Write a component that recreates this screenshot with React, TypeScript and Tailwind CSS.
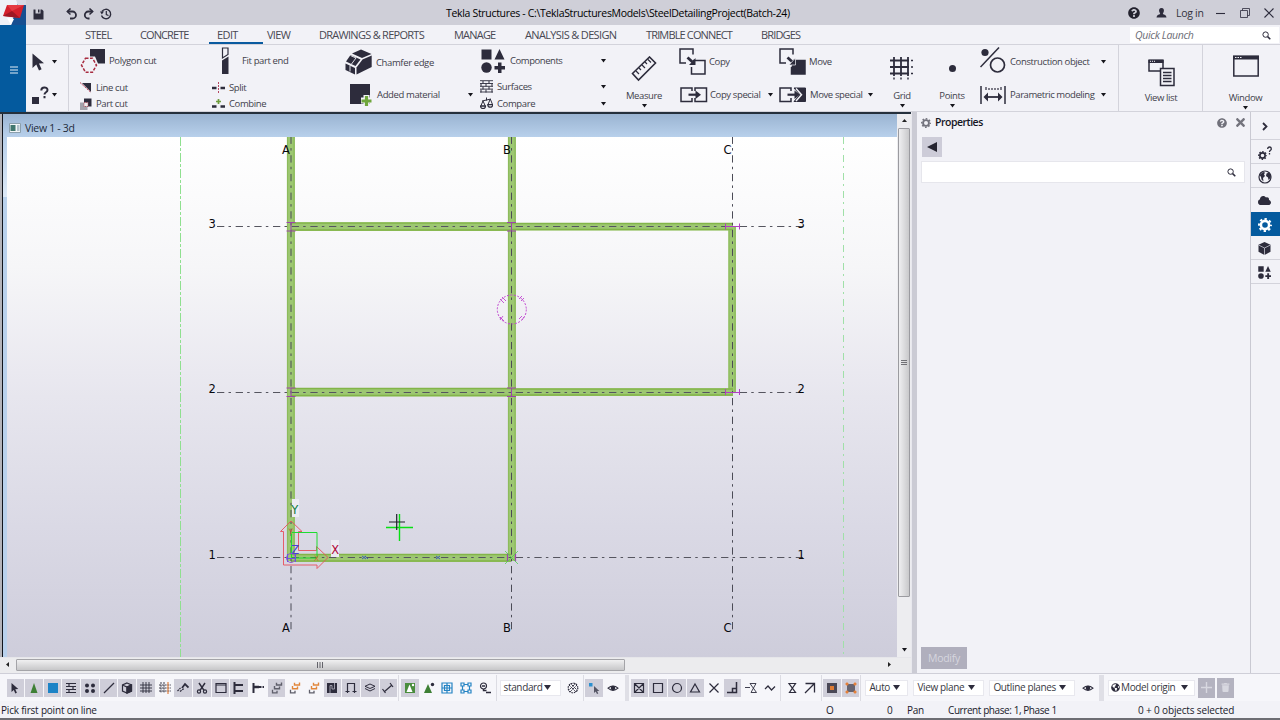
import React from 'react';
import { FaQuestionCircle, FaCloud, FaGlobeAmericas, FaTimes, FaTrash } from 'react-icons/fa';

const INK = '#2d2c3c';

type SvgProps = { w: number; h: number; className?: string; children: React.ReactNode };

const Glyph = ({ w, h, className = '', children }: SvgProps) => (
  <svg width={w} height={h} viewBox={`0 0 ${w} ${h}`} className={`block shrink-0 ${className}`} fill="none" stroke={INK}>
    {children}
  </svg>
);

const Caret = ({ className = '' }: { className?: string }) => (
  <svg width="5" height="4" viewBox="0 0 5 4" className={`block shrink-0 ${className}`}>
    <path d="M0 0h5L2.500 3.600z" fill="#15151c" />
  </svg>
);

/* ---------- Shared drawings ---------- */

const Shapes = ({ size, className = '' }: { size: number; className?: string }) => (
  <svg width={size} height={size} viewBox="0 0 24 24" className={`block shrink-0 ${className}`} fill={INK}>
    <path d="M0.500 0.500h10v10h-10zM18.500 0l5 10.500h-10z" />
    <circle cx="5.500" cy="18.500" r="5.200" />
    <path d="M17 13.500h3.500V17H24v3.500h-3.500V24H17v-3.500h-3.500V17H17z" />
  </svg>
);

const Search = ({ className = '' }: { className?: string }) => (
  <Glyph w={9} h={9} className={className}>
    <circle cx="3.600" cy="3.600" r="2.700" strokeWidth="1" />
    <path d="M5.600 5.600L8.300 8.300" strokeWidth="1.500" />
  </Glyph>
);

const Arrow = ({ className = '' }: { className?: string }) => (
  <Glyph w={13} h={18} className={className}>
    <path d="M0.500 0.500V15l3.800-3.500L7 17.500l2.600-1.200L7 10.500l5-0.300z" fill={INK} stroke="none" />
  </Glyph>
);

/* ---------- Title bar and tabs ---------- */

const TitleBar = () => (
  <div className="flex h-[25px] items-center bg-[#cfcfd8] pt-px">
    <Glyph w={11} h={11} className="ml-[7px] mt-[2px]">
      <path d="M0.500 0.500h2v4h5v-4h1.500L10.500 2v8.500h-10z" fill={INK} stroke="none" />
      <path d="M5 0.500h1.500V3.500H5z" fill={INK} stroke="none" />
    </Glyph>
    <Glyph w={11} h={12} className="ml-[22px] mt-[2px]">
      <path d="M1.500 3.500H6.500a3.500 3.500 0 0 1 0 7H4" strokeWidth="1.800" />
      <path d="M4.500 0.500L1.300 3.600L4.500 6.500" strokeWidth="1.500" />
    </Glyph>
    <Glyph w={11} h={12} className="ml-[6px] mt-[2px]">
      <path d="M9.500 3.500H5.300a3.500 3.500 0 0 0 0 7H6.500" strokeWidth="1.800" />
      <path d="M6.500 0.500L9.700 3.600L6.500 6.500" strokeWidth="1.500" />
    </Glyph>
    <Glyph w={12} h={12} className="ml-[6px] mt-[2px]">
      <path d="M2 3.500a4.700 4.700 0 1 1-0.500 4" strokeWidth="1.400" />
      <path d="M0 3.500h4L1.800 6.500z" fill={INK} stroke="none" />
      <path d="M6.300 3V6.500L8.500 7.500" strokeWidth="1.200" />
    </Glyph>
    <div className="ml-[334px] w-[682px] whitespace-nowrap pt-px text-[10.5px] tracking-[-0.32px] text-black">
      Tekla Structures - C:\TeklaStructuresModels\SteelDetailingProject(Batch-24)
    </div>
    <FaQuestionCircle className="h-3 w-3 shrink-0 text-[#23222e]" />
    <Glyph w={11} h={10} className="ml-4">
      <path d="M5.500 0c2 0 2.800 1.600 2.300 3.500L6.800 6c1.500 0.700 3.500 1 3.700 3.500h-10C0.700 7 2.700 6.700 4.200 6L3.200 3.500C2.700 1.600 3.500 0 5.500 0z" fill={INK} stroke="none" />
    </Glyph>
    <span className="ml-[9px] w-[29px] whitespace-nowrap pt-px text-[10.5px] tracking-[-0.3px] text-[#333340]">Log in</span>
    <Glyph w={9} h={10} className="ml-[11px]">
      <path d="M0 5.500h9" strokeWidth="1.100" />
    </Glyph>
    <Glyph w={10} h={10} className="ml-[15px]">
      <path d="M0.500 2.500h7v7h-7zM2.500 2.500v-2h7v7h-2" strokeWidth="0.800" />
    </Glyph>
    <Glyph w={10} h={10} className="ml-[14px]">
      <path d="M0.500 0.500l9 9M9.500 0.500l-9 9" strokeWidth="1.100" />
    </Glyph>
  </div>
);

const Tab = ({ label, className }: { label: string; className: string }) => (
  <div className={`whitespace-nowrap text-[11px] leading-[19px] text-[#484852] ${className}`}>{label}</div>
);

const Tabs = () => (
  <div className="flex h-5 border-b border-[#d3d3db]">
    <Tab label="STEEL" className="ml-[59px] w-[55px] tracking-[-0.7px]" />
    <Tab label="CONCRETE" className="w-[69px] tracking-[-0.9px]" />
    <div className="h-[19px] w-[54px] border-b-2 border-[#0a5ba0] pl-2">
      <Tab label="EDIT" className="tracking-[-0.6px]" />
    </div>
    <Tab label="VIEW" className="ml-1 w-[52px] tracking-[-0.7px]" />
    <Tab label="DRAWINGS & REPORTS" className="w-[135px] tracking-[-0.72px]" />
    <Tab label="MANAGE" className="w-[71px] tracking-[-0.8px]" />
    <Tab label="ANALYSIS & DESIGN" className="w-[121px] tracking-[-0.65px]" />
    <Tab label="TRIMBLE CONNECT" className="w-[115px] tracking-[-0.85px]" />
    <Tab label="BRIDGES" className="w-[369px] tracking-[-0.85px]" />
    <div className="mt-[2px] flex h-[16px] w-[149px] shrink-0 items-center bg-white pl-[5px] pr-[8px] pt-px text-[10.5px] italic text-[#6d6d76]">
      <span className="flex-1 tracking-[-0.35px]">Quick Launch</span>
      <Search />
    </div>
  </div>
);

/* ---------- Ribbon ---------- */

const Label = ({ children, className = '' }: { children: React.ReactNode; className?: string }) => (
  <span className={`whitespace-nowrap text-[9.5px] leading-[14px] tracking-[-0.38px] text-[#3f3f4b] ${className}`}>{children}</span>
);

const PairIcon = ({ filled }: { filled?: boolean }) => (
  <Glyph w={27} h={28}>
    <path d="M14 6.500V1H1v14h6" strokeWidth="1.500" />
    <path d="M14 12.500h12V26H12.500v-7" strokeWidth="1.500" fill={filled ? INK : 'none'} />
    <path d="M8.500 9.500l5 4.500" strokeWidth="2.800" />
    <path d="M16.500 10v7H10z" fill={INK} stroke={filled ? '#f2f2f7' : 'none'} strokeWidth="0.700" />
  </Glyph>
);

const SpecialIcon = ({ filled }: { filled?: boolean }) => (
  <Glyph w={28} h={16}>
    <path d="M12 4V1H1v13.500h11V11" strokeWidth="1.500" />
    {filled ? (
      <path d="M15 1h11.500v13.500H15l6-6.700z" fill={INK} strokeWidth="1" />
    ) : (
      <path d="M15 4V1h11.500v13.500H15V11" strokeWidth="1.500" />
    )}
    {filled && <path d="M17 1.500l5.500 6.200-5.500 6.300" stroke="#f2f2f7" strokeWidth="1.500" />}
    <path d="M8.500 7.700h8" strokeWidth="2.200" />
    <path d="M15.500 3.500l5.500 4.200-5.500 4.300z" fill={INK} stroke="none" />
  </Glyph>
);

const Tall = ({ label, className = '', children }: { label: string; className?: string; children: React.ReactNode }) => (
  <div className={`flex flex-col items-center ${className}`}>
    <div className="flex h-[44px] items-center">{children}</div>
    <Label className="leading-[13px]">{label}</Label>
    <Caret className="mt-px" />
  </div>
);

const CutColumn = () => (
  <div className="flex w-[140px] flex-col pl-[11px]">
    <div className="flex h-[34px] items-center">
      <Glyph w={26} h={26}>
        <path d="M10 1h15v14.500h-7L15 8.500H10z" fill={INK} stroke="none" />
        <path d="M5.500 10.200h7l4 7-4 7h-7l-4-7z" stroke="#a82c40" strokeWidth="1.500" strokeDasharray="3 1.500" />
      </Glyph>
      <Label className="ml-[3px] pt-px">Polygon cut</Label>
    </div>
    <div className="mt-[4px] flex h-[15px] items-center">
      <Glyph w={12} h={11}>
        <path d="M2 1h9v9z" fill={INK} stroke="none" />
        <path d="M0 0.500l11 10" stroke="#c0405a" strokeDasharray="2 1" />
      </Glyph>
      <Label className="ml-1">Line cut</Label>
    </div>
    <div className="mt-[2px] flex h-[15px] items-center">
      <Glyph w={12} h={12}>
        <path d="M0 4.500h7.500V12H0z" fill="#a3a3ac" stroke="none" />
        <path d="M4 0.500h7.500v8H4z" fill={INK} stroke="none" />
        <path d="M4 4.500h4v4H4z" fill="#eee" stroke="#b25162" strokeDasharray="1 1" />
      </Glyph>
      <Label className="ml-1">Part cut</Label>
    </div>
  </div>
);

const SplitColumn = () => (
  <div className="flex w-[132px] flex-col">
    <div className="flex h-[34px] items-center pl-3">
      <Glyph w={9} h={28}>
        <path d="M1.500 1h5.500v6.500l-5.500 3.500z" strokeWidth="1.200" />
        <path d="M1 13.500l6.500-4V27H1z" fill={INK} stroke="none" />
      </Glyph>
      <Label className="ml-3 pt-px tracking-[-0.25px]">Fit part end</Label>
    </div>
    <div className="mt-[4px] flex h-[15px] items-center pl-[3px]">
      <Glyph w={13} h={12}>
        <path d="M0 6h4.500M8.500 6H13" strokeWidth="2.500" />
        <path d="M6.500 0v12" stroke="#b44660" strokeDasharray="2 1" />
      </Glyph>
      <Label className="ml-1">Split</Label>
    </div>
    <div className="mt-[2px] flex h-[15px] items-center pl-[3px]">
      <Glyph w={13} h={12}>
        <path d="M0 8.500h4.500M8.500 8.500H13" strokeWidth="2.500" />
        <path d="M6.500 1v5M4 3.500h5" stroke="#6d9c3c" strokeWidth="1.700" />
      </Glyph>
      <Label className="ml-1">Combine</Label>
    </div>
  </div>
);

const SolidColumn = () => (
  <div className="flex w-[136px] flex-col pl-1">
    <div className="flex h-[34px] items-center">
      <Glyph w={27} h={26}>
        <path d="M7 4.500L16 0.500l10.500 4.500-9.500 4z" fill={INK} stroke="none" />
        <path d="M5.500 6L15.500 10.500 10.500 17 1 12.500z" fill={INK} stroke="none" />
        <path d="M5.500 6.500l5.500 2.500-4.500 6" stroke="#f2f2f7" strokeWidth="0.900" />
        <path d="M0.500 14.500L10 19v6.500L0.500 21z" fill={INK} stroke="none" />
        <path d="M26.700 6.500V18L11.500 25.500v-7L17.500 10.500z" fill={INK} stroke="none" />
        <path d="M5 16.500v6" stroke="#f2f2f7" strokeWidth="0.900" />
      </Glyph>
      <Label className="ml-[4px] pt-px">Chamfer edge</Label>
    </div>
    <div className="flex h-[32px] items-center pl-[5px]">
      <Glyph w={23} h={23}>
        <path d="M0 0h20v20H0z" fill={INK} stroke="none" />
        <path d="M16.500 11v12M11 16.500h12" stroke="#f2f2f7" strokeWidth="6" />
        <path d="M16.500 12v10M11.500 17h10" stroke="#6fa63c" strokeWidth="3.200" />
      </Glyph>
      <Label className="ml-1 w-[93px] tracking-[-0.3px]">Added material</Label>
    </div>
  </div>
);

const ComponentColumn = () => (
  <div className="flex w-[140px] flex-col pl-[3px]">
    <div className="flex h-[32px] items-center pt-px">
      <Shapes size={24} className="ml-[1px]" />
      <Label className="ml-[5px] w-[91px] tracking-[-0.45px]">Components</Label>
      <Caret />
    </div>
    <div className="mt-[3px] flex h-[15px] items-center">
      <Glyph w={13} h={13}>
        <path d="M0 0.700h13M0 3.500h13M0 6.300h13M0 9.100h13M0 12h13" strokeWidth="0.900" />
        <path d="M3 1v2.500M9 1v2.500M6 3.500v3M12 3.500v3M3 6.500v3M9 6.500v3M6 9.500v3M12 9.500v3M1 3.500v3M1 9.500v3" strokeWidth="1" />
      </Glyph>
      <Label className="ml-1 w-[104px]">Surfaces</Label>
      <Caret />
    </div>
    <div className="mt-[2px] flex h-[15px] items-center">
      <Glyph w={13} h={13}>
        <path d="M2 4l9-2M6.500 0.500v3M3 4L0.800 9h4.500zM10.300 2L8 7.500h4.500z" strokeWidth="1" />
        <path d="M0.500 9h5a2.500 2.500 0 0 1-5 0zM7.800 7.700h5a2.500 2.500 0 0 1-5 0z" strokeWidth="1.200" />
      </Glyph>
      <Label className="ml-1 w-[104px]">Compare</Label>
      <Caret />
    </div>
  </div>
);

const Ribbon = () => (
  <div className="flex h-[67px] border-b border-[#d3d3db]">
    <div className="flex w-[43px] flex-col border-r border-[#d3d3db] pl-[6px]">
      <div className="flex h-[33px] items-center">
        <Arrow />
        <Caret className="ml-[7px]" />
      </div>
      <div className="flex h-[33px] items-center">
        <Glyph w={18} h={18}>
          <path d="M0 11h7v7H0z" fill={INK} stroke="none" />
          <path d="M9.300 4.500C9.300 0.500 15.500 0.500 15.500 4c0 2.500-3 2-3 4.500M12.500 10v2.200" strokeWidth="2" />
        </Glyph>
        <Caret className="ml-[2px]" />
      </div>
    </div>
    <CutColumn />
    <SplitColumn />
    <SolidColumn />
    <Caret className="-ml-[9px] mr-[4px] mt-[48px]" />
    <ComponentColumn />
    <Tall label="Measure" className="w-[54px]">
      <Glyph w={26} h={26} className="mt-1">
        <path d="M1.500 17.500L18.500 1l6 6L7.500 24z" strokeWidth="1.600" />
        <path d="M5 15l3 3M8 12l2 2M11 9l3 3M14 6l2 2M17 3.500l3 3" strokeWidth="1.200" />
      </Glyph>
    </Tall>
    <div className="flex w-[104px] flex-col pl-2">
      <div className="flex h-[33px] items-center">
        <PairIcon />
        <Label className="ml-[3px] pt-px">Copy</Label>
      </div>
      <div className="flex h-[33px] items-center pl-[1px]">
        <SpecialIcon />
        <Label className="ml-[2px] w-[58px]">Copy special</Label>
        <Caret />
      </div>
    </div>
    <div className="flex w-[101px] flex-col pl-1">
      <div className="flex h-[33px] items-center">
        <PairIcon filled />
        <Label className="ml-[3px] pt-px">Move</Label>
      </div>
      <div className="flex h-[33px] items-center">
        <SpecialIcon filled />
        <Label className="ml-[3px] w-[58px]">Move special</Label>
        <Caret />
      </div>
    </div>
    <Tall label="Grid" className="w-[52px]">
      <Glyph w={24} h={24} className="mt-1">
        <path d="M0 3.500h19M0 10h19M0 16.500h19M4 0v19M11 0v19M18 0v19" strokeWidth="1.800" />
        <path d="M21 3.500h2M21 10h2M21 16.500h2M4 20.500v2M11 20.500v2M18 20.500v2" strokeWidth="1.400" />
      </Glyph>
    </Tall>
    <Tall label="Points" className="w-[48px]">
      <span className="mt-[3px] h-[7px] w-[7px] rounded-full bg-[#2d2c3c]" />
    </Tall>
    <div className="flex w-[142px] flex-col pl-1">
      <div className="flex h-[33px] items-center">
        <Glyph w={26} h={26} className="-mt-1">
          <circle cx="5" cy="5.500" r="3.600" fill={INK} stroke="none" />
          <circle cx="17.500" cy="18" r="7" strokeWidth="1.700" />
          <path d="M0.500 20L19 0.500" strokeWidth="1.500" />
        </Glyph>
        <Label className="ml-1 w-[91px]">Construction object</Label>
        <Caret />
      </div>
      <div className="flex h-[33px] items-center">
        <Glyph w={26} h={18}>
          <path d="M1 0v18M25 0v18" strokeWidth="1.500" />
          <path d="M6 1v3M9 2v2M12 2v2M15 2v2M18 2v2M21 1v3" strokeWidth="1.200" />
          <path d="M5 11h16" strokeWidth="1.800" />
          <path d="M8 6.500L3.500 11 8 15.500zM18 6.500l4.500 4.500-4.500 4.500z" fill={INK} stroke="none" />
        </Glyph>
        <Label className="ml-1 w-[91px] tracking-[-0.42px]">Parametric modeling</Label>
        <Caret />
      </div>
    </div>
    <div className="flex w-[85px] flex-col items-center border-x border-[#d3d3db] pl-px pt-[14px]">
      <Glyph w={27} h={28}>
        <path d="M1 1.500h14V12H1z" strokeWidth="1.500" />
        <path d="M0.500 0.500h15v3.500h-15z" fill={INK} stroke="none" />
        <path d="M2 2.300h6" stroke="#f2f2f7" strokeDasharray="1 1" />
        <path d="M12.500 9.500h13.500v17H12.500z" fill="#f2f2f7" strokeWidth="1.500" />
        <path d="M15 13.500h8.500M15 16.500h8.500M15 19.500h8.500M15 22.500h8.500" strokeWidth="1.300" />
      </Glyph>
      <Label className="mt-[4px] tracking-[-0.15px]">View list</Label>
    </div>
    <div className="flex flex-1 flex-col items-center pl-2 pt-[10px]">
      <Glyph w={26} h={22}>
        <path d="M0.800 1.500h24.400V21H0.800z" strokeWidth="1.500" />
        <path d="M0 0.500h26v4H0z" fill={INK} stroke="none" />
        <path d="M2 2.500h7" stroke="#f2f2f7" strokeDasharray="1.500 1" />
      </Glyph>
      <Label className="mt-[14px] tracking-[-0.3px]">Window</Label>
      <Caret className="mt-px" />
    </div>
  </div>
);

/* ---------- Model view ---------- */

const GRID_DASH = '7.300 4.200 2.500 4.670';
const COLUMNS = [{ name: 'A', x: 291 }, { name: 'B', x: 511.5 }, { name: 'C', x: 732.5 }];
const ROWS = [{ name: '3', y: 226.5 }, { name: '2', y: 392.5 }, { name: '1', y: 557.5 }];
const BEAMS = [
  { x: 287, y: 137, w: 8, h: 424 },
  { x: 508, y: 137, w: 8, h: 424 },
  { x: 728.5, y: 226, w: 7.5, h: 167 },
  { x: 291, y: 222.5, w: 220, h: 8.5 },
  { x: 511, y: 223, w: 222, h: 7.5 },
  { x: 291, y: 388, w: 220, h: 8.5 },
  { x: 511, y: 388.5, w: 222, h: 7.5 },
  { x: 291, y: 554, w: 220, h: 8 },
];
const JOINTS = [{ x: 291, y: 226.5 }, { x: 511.5, y: 226.5 }, { x: 291, y: 392 }, { x: 511.5, y: 392 }];

const ModelCanvas = () => (
  <svg width="890" height="520" viewBox="7 137 890 520" className="block" fill="none" fontFamily='"DejaVu Sans", sans-serif' fontSize="11.500">
    <defs>
      <linearGradient id="sky" x1="0" y1="0" x2="0" y2="1">
        <stop offset="0" stopColor="#ffffff" />
        <stop offset="0.250" stopColor="#f6f6f8" />
        <stop offset="0.500" stopColor="#e7e6ee" />
        <stop offset="0.750" stopColor="#dad9e5" />
        <stop offset="1" stopColor="#cecddb" />
      </linearGradient>
    </defs>
    <rect x="7" y="137" width="890" height="520" fill="url(#sky)" />
    <path d="M180.500 137v520" stroke="#8fe08f" strokeDasharray="9 2 3 2" />
    <path d="M843.500 137v520" stroke="#a0e0a8" strokeDasharray="7 4 2 5" />
    {BEAMS.map((b, i) => (
      <g key={i}>
        <rect x={b.x} y={b.y} width={b.w} height={b.h} fill="#9dc772" />
        {b.h > b.w ? (
          <path d={`M${b.x + 0.5} ${b.y}v${b.h}M${b.x + b.w - 1} ${b.y}v${b.h}`} stroke="#8dbb5c" strokeWidth="1.200" />
        ) : (
          <path d={`M${b.x} ${b.y + 0.5}h${b.w}M${b.x} ${b.y + b.h - 1}h${b.w}`} stroke="#82b548" strokeWidth="1.400" />
        )}
      </g>
    ))}
    {COLUMNS.map((c) => (
      <path key={c.name} d={`M${c.x} 136.600V632`} stroke="#4b4b56" strokeWidth="1" strokeDasharray={GRID_DASH} />
    ))}
    {ROWS.map((r) => (
      <path key={r.name} d={`M217 ${r.y}H805`} stroke="#55555f" strokeWidth="1" strokeDasharray={GRID_DASH} />
    ))}
    {JOINTS.map((j, i) => (
      <path key={i} d={`M${j.x - 4.5} ${j.y - 4}h9M${j.x - 4.5} ${j.y + 4.5}h9M${j.x} ${j.y - 4}v8`} stroke="#9d45ab" />
    ))}
    <path d="M725.500 223.500v6M739.500 223.500v6M725 226.500h14M725.500 389v6M739.500 389v6M725 392.500h14" stroke="#b03fc2" />
    <path d="M507.500 553.500v8M515.500 553.500v8" stroke="#9d45ab" strokeWidth="1.200" />
    <path d="M505 551l13 13M518 551l-13 13" stroke="#4fd24f" strokeWidth="0.800" />
    <circle cx="511.800" cy="309.500" r="14.500" stroke="#c044d0" strokeDasharray="2 1.500" />
    <path d="M500 299l4 4M502 297l4 4M519 299l3-3M521 301l3-3M500 317l4 4M503 316l-3 4M519 319l3-3M522 320l2-3" stroke="#c044d0" strokeWidth="0.900" />

    {/* Work plane axes */}
    <path d="M283.500 565V531.500h-3L291 521l11 10.500h-3.500V550.500h18v-4L328 557.500l-11 11V565z" stroke="#e8505c" strokeWidth="0.900" />
    <path d="M291.500 532.500H317V558h-25.500z" stroke="#1fdc30" />
    <g fill="#ebebf2">
      <rect x="292" y="499" width="7" height="18" />
      <rect x="331" y="540" width="8" height="17" />
    </g>
    <text x="291.300" y="514" fill="#0a7a3c">Y</text>
    <text x="291.300" y="554" fill="#4a3dd6">Z</text>
    <text x="331.300" y="554" fill="#b0083a">X</text>
    <text x="288.500" y="534" fontSize="7.500" fill="#d9543d">Y</text>
    <text x="314" y="561" fontSize="7.500" fill="#c87430">X</text>
    <circle cx="291" cy="558" r="4.500" stroke="#9058d0" />
    <path d="M287.500 554v8M295.500 554v8M287 558.500h8" stroke="#7050e0" />
    <path d="M362 556l4 3M362 559l4-3M365 556l3 3M436 556l4 3M436 559l4-3" stroke="#3550c0" strokeWidth="0.900" />

    {/* Cursor */}
    <path d="M386 527.500h27M399.500 514v27" stroke="#08e014" strokeWidth="1.400" />
    <path d="M389 522h16M396.700 514v16" stroke="#20202a" strokeWidth="1.200" />

    <g fill="#08080e">
      <text x="282" y="154">A</text>
      <text x="503" y="154">B</text>
      <text x="723.500" y="154">C</text>
      <text x="282" y="632">A</text>
      <text x="503" y="632">B</text>
      <text x="723.500" y="632">C</text>
      <text x="208.500" y="227.500">3</text>
      <text x="208.500" y="393">2</text>
      <text x="208.500" y="558.500">1</text>
      <text x="797.500" y="227.500">3</text>
      <text x="797.500" y="393">2</text>
      <text x="797.500" y="558.500">1</text>
    </g>
  </svg>
);

const ModelView = () => (
  <div className="flex h-[561px] w-[911px] flex-col border-t-2 border-[#25303c] bg-[#f0f0f2]">
    <div className="flex h-[543px]">
      <div className="w-[2px] bg-[#b4b4ba]" />
      <div className="w-[895px] border-l border-[#10141c]">
        <div className="flex h-[23px] items-center bg-gradient-to-b from-[#9ab4d2] to-[#b8d0eb] pl-[6px] pt-[5px]">
          <Glyph w={12} h={10}>
            <path d="M0.500 0.500h11v9H0.500z" fill="#f2f6f8" stroke="#8b9fac" />
            <path d="M1.500 2h5v6h-5z" fill="#41776f" stroke="none" />
            <path d="M8 3h2.500M8 5h2.500M8 7h2.500" stroke="#6d8a9c" />
          </Glyph>
          <span className="ml-1 text-[10.5px] leading-3 tracking-[-0.3px] text-[#1c2a3a]">View 1 - 3d</span>
        </div>
        <div className="flex">
          <div className="flex w-1 shrink-0 flex-col">
            <div className="h-[60px] bg-gradient-to-b from-[#b7cfea] to-[#dde9f6]" />
            <div className="flex-1 bg-[#b9d1ec]" />
          </div>
          <ModelCanvas />
        </div>
      </div>
      <div className="flex w-[14px] flex-col items-center bg-[#ededf0]">
        <svg width="5" height="3" viewBox="0 0 5 3" className="mt-[5px] block"><path d="M0 3h5L2.500 0z" fill="#222" /></svg>
        <div className="mt-[6px] flex h-[469px] w-[12px] items-center justify-center rounded-[1px] border border-[#9b9ba0] bg-gradient-to-r from-[#efeff1] to-[#c9c9cb]">
          <Glyph w={6} h={6}>
            <path d="M0 0.500h6M0 2.500h6M0 4.500h6" stroke="#55555c" strokeWidth="0.800" />
          </Glyph>
        </div>
        <Caret className="mt-[51px]" />
      </div>
    </div>
    <div className="flex h-4 items-center border-t border-[#e6e6ea] bg-[#ececee] pb-[2px]">
      <svg width="3" height="5" viewBox="0 0 3 5" className="ml-[6px] block"><path d="M3 0v5L0 2.500z" fill="#222" /></svg>
      <div className="ml-[7px] flex h-[12px] w-[609px] items-center justify-center rounded-[1px] border border-[#a4a4a8] bg-gradient-to-b from-[#f0f0f1] to-[#c7c7c9] pr-[2px]">
        <Glyph w={6} h={6}>
          <path d="M0.500 0v6M3 0v6M5.500 0v6" stroke="#44444c" strokeWidth="0.800" />
        </Glyph>
      </div>
      <svg width="3" height="5" viewBox="0 0 3 5" className="ml-[263px] block"><path d="M0 0v5L3 2.500z" fill="#222" /></svg>
    </div>
  </div>
);

/* ---------- Properties pane ---------- */

const GearRing = ({ size, color, className = '' }: { size: number; color: string; className?: string }) => (
  <svg width={size} height={size} viewBox="0 0 14 14" fill="none" stroke={color} className={`block shrink-0 ${className}`}>
    <circle cx="7" cy="7" r="4.100" strokeWidth="2.600" />
    <circle cx="7" cy="7" r="6" strokeWidth="2" strokeDasharray="2.350 2.362" strokeDashoffset="1.200" />
  </svg>
);

const PropertiesPane = () => (
  <div className="flex w-[333px] flex-col bg-[#f2f2f7]">
    <div className="flex h-[21px] items-center pl-[4px] pr-[3px]">
      <GearRing size={10} color="#74747e" />
      <span className="ml-1 flex-1 text-[10.5px] font-semibold tracking-[-0.5px] text-[#15151f]">Properties</span>
      <FaQuestionCircle className="h-[10px] w-[10px] text-[#71717b]" />
      <FaTimes className="ml-[7px] h-[13px] w-[13px] text-[#74747d]" />
    </div>
    <div className="ml-[5px] mt-1 flex h-5 w-5 items-center justify-center bg-[#cdccd8]">
      <svg width="10" height="10" viewBox="0 0 10 10"><path d="M10 0v10L0 5z" fill="#252430" /></svg>
    </div>
    <div className="ml-[4px] mt-1 flex h-[22px] w-[324px] items-center justify-end border border-[#e6e6ec] bg-white pr-2">
      <Search />
    </div>
    <div className="flex-1" />
    <div className="mb-[4px] ml-[4px] flex h-[22px] w-[46px] items-center justify-center bg-[#b0afbd] pt-px text-[10.5px] tracking-[-0.3px] text-[#d6d6df]">Modify</div>
  </div>
);

const SideBar = () => (
  <div className="flex w-[30px] flex-col border-l border-[#c9c9d2] bg-[#f2f2f7]">
    <div className="flex h-[28px] items-center justify-center border-b border-[#d3d3db] pr-[2px] pt-[2px]">
      <Glyph w={6} h={9}><path d="M1 1l3.500 3.500L1 8" strokeWidth="1.800" /></Glyph>
    </div>
    <div className="flex h-6 items-center justify-center border-b border-[#d3d3db] pr-[2px] pt-[2px]">
      <GearRing size={9} color={INK} className="mt-[5px]" />
      <Glyph w={5} h={9} className="-mt-[5px]">
        <path d="M0.700 3C0.700 0.300 4.300 0.300 4.300 3c0 1.500-1.800 1.200-1.800 3M2.500 7v1.500" strokeWidth="1.300" />
      </Glyph>
    </div>
    <div className="flex h-6 items-center justify-center border-b border-[#d3d3db] pr-[2px] pt-[2px]">
      <Glyph w={14} h={14}>
        <circle cx="7" cy="7" r="6" strokeWidth="1.200" />
        <path d="M1.500 5l3.500-3 2 0.500-1 2 1 1.500-2 2 0.500 3.500-2-2-0.500-2.500zM8.500 3.500l2.500-1 2 3-0.500 2.500-2 2-0.500-2.500-2-1.500z" fill={INK} stroke="none" />
      </Glyph>
    </div>
    <div className="flex h-6 items-center justify-center pr-[2px] pt-px text-[#2d2c3c]"><FaCloud className="h-[13px] w-[13px]" /></div>
    <div className="flex h-6 items-center justify-center bg-[#045a9e] pr-[2px] pt-px"><GearRing size={14} color="#ffffff" /></div>
    <div className="flex h-6 items-center justify-center border-b border-[#d3d3db] pr-[2px] pt-[2px]">
      <Glyph w={13} h={13}>
        <path d="M6.500 0L12.500 2.800v7L6.500 13 0.500 9.800v-7z" fill={INK} stroke="none" />
        <path d="M0.500 3l6 3 6-3M6.500 6v7" stroke="#c4c4cf" strokeWidth="0.800" />
      </Glyph>
    </div>
    <div className="flex h-6 items-center justify-center border-b border-[#d3d3db] pr-[2px] pt-[2px]"><Shapes size={13} /></div>
  </div>
);

/* ---------- Selection and snapping toolbar ---------- */

type ToolProps = { on?: boolean; children: React.ReactNode };

const Tool = ({ on, children }: ToolProps) => (
  <div className={`flex h-[18px] w-[17.67px] shrink-0 items-center justify-center ${on ? 'bg-[#cfced9]' : ''}`}>
    <svg width="12" height="12" viewBox="0 0 12 12" fill="none" stroke={INK} strokeWidth="1.200" className="block">{children}</svg>
  </div>
);

const Sep = () => <div className="h-[26px] w-px shrink-0 bg-[#dcdce3]" />;

const Eye = () => (
  <>
    <path d="M1 6.200Q6 1.700 11 6.200Q6 10.500 1 6.200z" strokeWidth="1.100" />
    <circle cx="6" cy="6" r="1.700" fill={INK} />
  </>
);

const Combo = ({ label, className = '', children }: { label: string; className?: string; children?: React.ReactNode }) => (
  <div className={`flex h-[16px] shrink-0 items-center justify-between whitespace-nowrap border border-[#e8e8ee] bg-white text-[10px] tracking-[-0.36px] text-[#383843] ${className}`}>
    <span className="flex items-center">{children}{label}</span>
    <svg width="7" height="5" viewBox="0 0 7 5" className="block shrink-0"><path d="M0 0h7L3.500 5z" fill={INK} /></svg>
  </div>
);

const Steps = ({ color }: { color: string }) => (
  <>
    <path d="M5.500 0.800V3h5V0.500" stroke={color} strokeWidth="1.400" />
    <path d="M3.500 4v2.800h5V4.500" stroke={color} strokeWidth="1.400" />
    <path d="M1.500 7.800v3h4.500v-2" stroke="#5f5f6b" strokeWidth="1.300" />
  </>
);

const SelectTools = () => (
  <div className="ml-[6.5px] flex gap-px">
    <Tool on><path d="M2.500 1v9l2.300-2 1.500 3.500 1.600-0.700-1.600-3.500 3-0.300z" fill={INK} stroke="none" /></Tool>
    <Tool on><path d="M6 1l3.500 10h-7z" fill="#3e8035" stroke="none" /></Tool>
    <Tool on><path d="M1 1h10v10H1z" fill="#1c83c6" stroke="none" /></Tool>
    <Tool on><path d="M1 1.500h10M1 4.500h10M1 7.500h10M1 10.500h10M4 1.500v3M8 4.500v3M4 7.500v3" /></Tool>
    <Tool on><path d="M1 3.500a2 2 0 1 1 4 0a2 2 0 1 1-4 0M7 3.500a2 2 0 1 1 4 0a2 2 0 1 1-4 0M1 9a2 2 0 1 1 4 0a2 2 0 1 1-4 0M7 9a2 2 0 1 1 4 0a2 2 0 1 1-4 0" fill={INK} stroke="none" /></Tool>
    <Tool on><path d="M1 11L11 1" /></Tool>
    <Tool on><path d="M6 1l4.500 2v6L6 11 1.500 9V3zM1.500 3L6 5l4.500-2M6 5v6" /><path d="M6 5l4.500-2v6L6 11z" fill={INK} /></Tool>
    <Tool on><path d="M3 0v11M6 0v11M9 0v11M0 3h12M0 6h12M0 9h12" strokeWidth="0.900" /></Tool>
    <Tool><path d="M2 0v11M5 0v11M0 3h12M0 6h12M0 9h12" strokeWidth="0.900" strokeDasharray="2 0.800" /><path d="M9 0v12" stroke="#df8040" /></Tool>
    <Tool on><path d="M5 6l3-4 3.500 3.500" strokeWidth="1.800" /><path d="M0.500 9l3-3M3 9.500l4-3" strokeDasharray="2 0.700" /></Tool>
    <Tool on><circle cx="3" cy="9.500" r="1.600" /><circle cx="9" cy="9.500" r="1.600" /><path d="M4 8.300L9 1M8 8.300L3 1" strokeWidth="1.500" /></Tool>
    <Tool on><path d="M1 1.500h10v9H1zM1 3h10" /></Tool>
    <Tool on><path d="M1.500 0v12M2 3h8M2 9h8" strokeWidth="2" /></Tool>
    <Tool><path d="M1.500 1v10" strokeWidth="2" /><path d="M2 5h5M7 4v2" strokeWidth="2.400" /><path d="M8 5h4" strokeDasharray="1.500 1" strokeWidth="2" /></Tool>
    <Tool on><Steps color="#5f5f6b" /></Tool>
    <Tool><Steps color="#e1873c" /></Tool>
    <Tool><Steps color="#e1873c" /></Tool>
    <Tool on><path d="M1 1h10v10H1z" fill={INK} stroke="none" /><path d="M4 3.500v7.500M4 3.500h2V7h2.500V1" stroke="#a9a8b5" strokeWidth="0.900" /></Tool>
    <Tool on><path d="M2.500 11V1.500h7V11M0.500 9.500h4M7.500 9.500h4" /></Tool>
    <Tool on><path d="M6 2l5 2.300-5 2.200L1 4.300zM1 6.500L6 9l5-2.500" strokeWidth="1" /></Tool>
    <Tool on><path d="M2 10l8-7M0.500 7l3 4M8 1l3 4" /></Tool>
  </div>
);

const BottomBar = () => (
  <div className="flex h-[28px] items-center border-t border-[#cfcfd8] bg-[#f6f6fa]">
    <SelectTools />
    <div className="ml-px"><Sep /></div>
    <div className="ml-[2px] flex gap-px">
      <Tool on><path d="M1 1h10v10H1z" fill="#4a8d3d" stroke="none" /><path d="M5.500 2.500l3 7.500h-6z" fill="#fff" stroke="none" /><circle cx="9" cy="3" r="1.200" fill="#fff" stroke="none" /></Tool>
      <Tool><path d="M5 2l4 9H1z" fill="#3e8035" stroke="none" /><circle cx="9.500" cy="2.500" r="1.700" fill={INK} stroke="none" /></Tool>
      <Tool><path d="M1 1h10v10H1z" stroke="#2584c4" /><path d="M3.500 3.500h5v5h-5zM6 1v10M1 6h10" stroke="#2584c4" /></Tool>
      <Tool><path d="M1 1h3v3H1zM8 1h3v3H8zM1 8h3v3H1zM8 8h3v3H8zM4 2.500h4M4 9.500h4M2.500 4v4M9.500 4v4" stroke="#2584c4" /></Tool>
      <Tool><circle cx="4.500" cy="4" r="3" /><path d="M3 4h3M4.500 7v1.500h3M7 10.500h5" strokeWidth="1.400" /></Tool>
    </div>
    <div className="ml-[2px]"><Sep /></div>
    <Combo label="standard" className="ml-[3px] w-[61px] pl-[3px] pr-[9px]" />
    <div className="ml-[4px]">
      <Tool><circle cx="6" cy="6" r="4.800" strokeDasharray="1.500 1" /><path d="M2 3l7 7M3.500 1.500l7 7M10 3l-7 7M8.500 1.500l-7 7" strokeDasharray="1.500 0.700" strokeWidth="1" /></Tool>
    </div>
    <div className="ml-px"><Sep /></div>
    <div className="ml-px flex gap-px">
      <Tool on><path d="M1 1h3.500v3.500H1z" fill="#2b90d0" stroke="none" /><path d="M6 4v7l1.700-1.500L9 12l1.300-0.600-1.200-2.500h2.200z" fill="#555564" stroke="none" /></Tool>
      <Tool><Eye /></Tool>
    </div>
    <div className="ml-[3px] h-[26px] w-[4px] bg-[#dfdfe6]" />
    <div className="ml-[2px] flex gap-px">
      <Tool on><path d="M1.500 1.500h9v9h-9zM1.500 1.500l9 9M10.500 1.500l-9 9" /></Tool>
      <Tool on><path d="M1.500 1.500h9v9h-9z" /></Tool>
      <Tool on><circle cx="6" cy="6" r="4.500" /></Tool>
      <Tool on><path d="M6 2l4.500 8h-9z" /></Tool>
      <Tool><path d="M1.500 1.500l9 9M10.500 1.500l-9 9" /></Tool>
      <Tool on><path d="M9.500 0v10.500H0M5.500 10V6.500h4" strokeWidth="1.500" /></Tool>
      <Tool><path d="M5 1.500h6L6 10.500h5.500L5 1.500M0 5.500h5" strokeWidth="0.900" /></Tool>
      <Tool><path d="M1 7l3-3 3.500 4L11 4.500" /></Tool>
    </div>
    <div className="ml-[1px]"><Sep /></div>
    <div className="ml-[2px] flex gap-px">
      <Tool><path d="M3 1.500h6.500L3.500 10.500h6L3 1.500z" strokeWidth="1.200" /></Tool>
      <Tool><path d="M1.500 1.500h9v9M10 2l-9 9" strokeWidth="1.300" /></Tool>
    </div>
    <div className="ml-[2px]"><Sep /></div>
    <div className="ml-[1px] flex gap-px">
      <Tool on><path d="M1 1h10v10H1z" fill="#4a4856" stroke="none" /><path d="M4 4h4v4H4z" fill="#df7c35" stroke="none" /></Tool>
      <Tool on><path d="M2 2h8v8H2z" fill="#666470" stroke="none" /><path d="M1 1h2v2H1zM9 1h2v2H9zM1 9h2v2H1zM9 9h2v2H9z" fill="#e5813a" stroke="#e5813a" strokeWidth="0.800" /></Tool>
    </div>
    <div className="ml-[1px]"><Sep /></div>
    <Combo label="Auto" className="ml-[4px] w-[43px] pl-[3px] pr-[7px]" />
    <Combo label="View plane" className="ml-[5px] w-[71px] pl-[3px] pr-[8px]" />
    <Combo label="Outline planes" className="ml-[5px] w-[86px] pl-[3px] pr-[8px]" />
    <div className="ml-[4px]"><Tool><Eye /></Tool></div>
    <div className="ml-[2px] h-[26px] w-[5px] bg-[#dfdfe6]" />
    <Combo label="Model origin" className="ml-[4px] w-[87px] pl-[2px] pr-[6px]">
      <FaGlobeAmericas className="mr-[1px] h-[9px] w-[9px] text-[#2d2c3c]" />
    </Combo>
    <div className="ml-[3px] flex h-5 w-[17px] items-center justify-center bg-[#b4b3c0]">
      <Glyph w={11} h={11}><path d="M5.500 0v11M0 5.500h11" stroke="#d8d8e0" strokeWidth="1.400" /></Glyph>
    </div>
    <div className="ml-[2px] flex h-5 w-[17px] items-center justify-center bg-[#b4b3c0] text-[#d8d8e0]">
      <FaTrash className="h-[9px] w-[9px]" />
    </div>
  </div>
);

const StatusBar = () => (
  <div className="flex h-[19px] items-center whitespace-nowrap border-b-2 border-[#6d6d73] bg-[#f2f2f7] pt-[2px] text-[10px] text-[#20202a]">
    <span className="ml-[1px] w-[825px] tracking-[-0.2px]">Pick first point on line</span>
    <span className="w-[61px]">O</span>
    <span className="w-[20px]">0</span>
    <span className="w-[41px] tracking-[-0.3px]">Pan</span>
    <span className="w-[190px] tracking-[-0.42px]">Current phase: 1, Phase 1</span>
    <span className="tracking-[-0.15px]">0 + 0 objects selected</span>
  </div>
);

export default function App() {
  return (
    <div className="flex h-[720px] w-[1280px] flex-col overflow-hidden bg-[#f2f2f7] font-['Open_Sans',sans-serif]">
      <div className="flex h-[112px]">
        <div className="flex w-[26px] shrink-0 flex-col bg-[#045a9e]">
          <svg width="26" height="25" viewBox="0 0 26 25" className="block">
            <path d="M0 0h26v25H0z" fill="#164f91" />
            <path d="M0 0h19L11 25H0z" fill="#eef1f7" />
            <path d="M16 0h10v5h-8z" fill="#d6d9e4" />
            <path d="M7 5h17l-4 13-17-2z" fill="#d4202c" />
            <path d="M3 16l9-5 8 7z" fill="#9e1724" />
            <path d="M7 5l5 6 12-6z" fill="#e43b42" />
            <path d="M7 18l7 1-3 6z" fill="#fff" />
          </svg>
          <div className="flex flex-1 items-center justify-center">
            <svg width="8" height="8" viewBox="0 0 8 8" className="ml-[2px] mt-[3px]"><path d="M0 1h8M0 4h8M0 7h8" stroke="#e3edf6" strokeWidth="1.100" /></svg>
          </div>
        </div>
        <div className="flex w-[1254px] flex-col">
          <TitleBar />
          <Tabs />
          <Ribbon />
        </div>
      </div>
      <div className="flex h-[561px]">
        <ModelView />
        <div className="w-[6px] border-l border-[#e8e8ee] bg-[#cbcbd4]" />
        <PropertiesPane />
        <SideBar />
      </div>
      <BottomBar />
      <StatusBar />
    </div>
  );
}
